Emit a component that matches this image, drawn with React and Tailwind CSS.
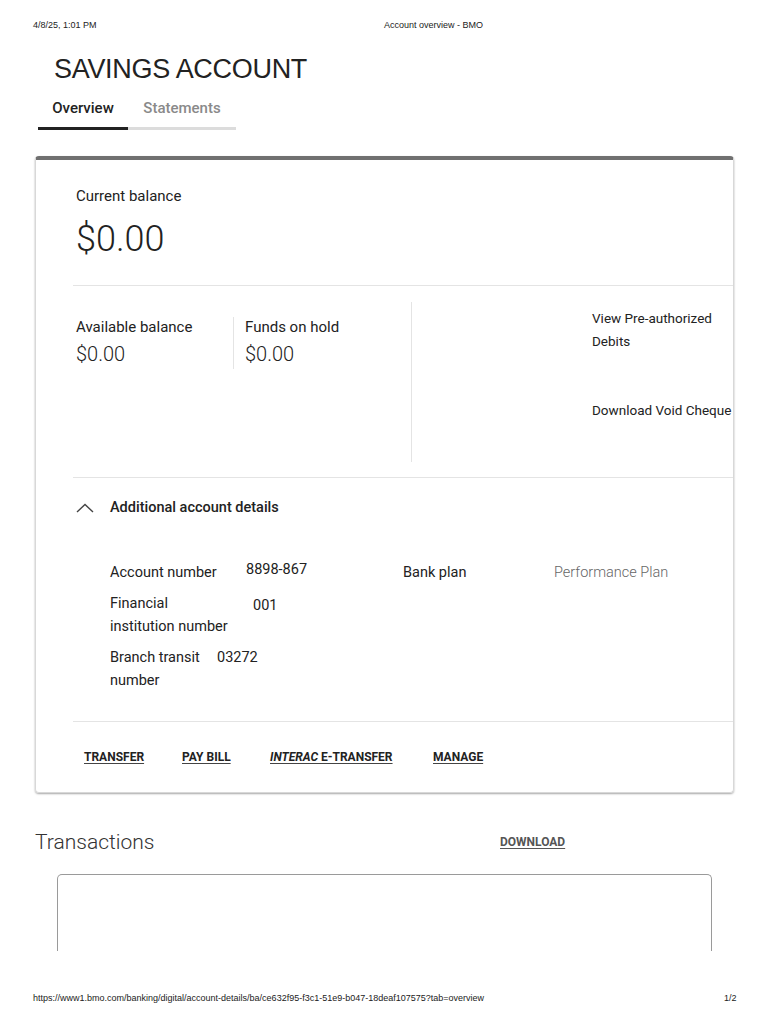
const roboto = { fontFamily: "Roboto, 'Liberation Sans', sans-serif" };

function Action({ children, slot }) {
  return (
    <div className={slot}>
      <a className="text-[12px] font-bold leading-4 text-[#222] underline underline-offset-2 decoration-[#444]">
        {children}
      </a>
    </div>
  );
}

function DetailRow({ label, labelWidth, value, valueClass = "" }) {
  return (
    <div className="flex items-start">
      <div className={labelWidth}>{label}</div>
      <div className={valueClass}>{value}</div>
    </div>
  );
}

export default function App() {
  return (
    <div className="w-[768px] h-[1024px] bg-white text-[#222] overflow-hidden flex flex-col">
      {/* print header */}
      <div className="flex pl-[33px] pt-[19px] text-[9px] leading-3 font-['Liberation_Sans',Arial,sans-serif]">
        <div className="w-[351px]">4/8/25, 1:01 PM</div>
        <div>Account overview - BMO</div>
      </div>

      <h1 className="ml-[54px] mt-[22px] text-[27px] leading-8 tracking-[-0.3px] font-['Liberation_Sans',Arial,sans-serif]">
        SAVINGS ACCOUNT
      </h1>

      {/* tabs */}
      <div className="ml-[38px] mt-[10px] flex" style={roboto}>
        <div className="w-[90px] flex flex-col">
          <div className="h-[32px] pt-[1px] text-center text-[15px] font-medium leading-6 text-[#222]">Overview</div>
          <div className="h-[3px] bg-[#222]" />
        </div>
        <div className="w-[108px] flex flex-col">
          <div className="h-[32px] pt-[1px] text-center text-[15px] font-medium leading-6 text-[#8a8a8a]">Statements</div>
          <div className="h-[3px] bg-[#dcdcdc]" />
        </div>
      </div>

      {/* account card */}
      <div
        className="ml-[35px] mt-[26px] w-[699px] h-[637px] rounded-[4px] border border-[#d8d8d8] border-t-4 border-t-[#707070] shadow-[0_1px_2px_rgba(0,0,0,0.35)] overflow-hidden pl-[37px]"
        style={roboto}
      >
        <div className="pl-[3px] pt-[26px] pb-[23px]">
          <div className="text-[15px] leading-5">Current balance</div>
          <div className="mt-[10px] text-[36px] leading-[46px] font-light">$0.00</div>
        </div>
        <div className="h-px bg-[#e4e4e4]" />

        <div className="flex h-[191px]">
          <div className="w-[338px] pt-[31px] pl-[3px] flex">
            <div className="w-[157px]">
              <div className="text-[15px] leading-5">Available balance</div>
              <div className="mt-[4px] text-[20px] leading-[26px] font-light">$0.00</div>
            </div>
            <div className="h-[52px] border-l border-[#e4e4e4] pl-[11px]">
              <div className="text-[15px] leading-5">Funds on hold</div>
              <div className="mt-[4px] text-[20px] leading-[26px] font-light">$0.00</div>
            </div>
          </div>
          <div className="mt-[16px] h-[160px] border-l border-[#e4e4e4]" />
          <div className="pl-[180px] pt-[21px] text-[13.5px] leading-[23px] whitespace-nowrap">
            <div>View Pre-authorized</div>
            <div>Debits</div>
            <div className="mt-[46px]">Download Void Cheque</div>
          </div>
        </div>
        <div className="h-px bg-[#e4e4e4]" />

        {/* additional details */}
        <div className="pt-[20px] pb-[29px]">
          <div className="flex items-center h-5">
            <svg width="18" height="10" viewBox="0 0 18 10" className="ml-[3px]" fill="none">
              <polyline points="1,9 9,1.5 17,9" stroke="#444" strokeWidth="1.4" />
            </svg>
            <div className="ml-[16px] text-[14.5px] font-medium leading-5">Additional account details</div>
          </div>
          <div className="mt-[43px] ml-[37px] flex text-[14.5px] leading-[23px]">
            <div className="w-[293px] flex flex-col gap-[8px]">
              <DetailRow
                label="Account number"
                labelWidth="w-[136px]"
                value="8898-867"
                valueClass="-mt-[3px]"
              />
              <DetailRow
                label={<>Financial<br />institution number</>}
                labelWidth="w-[143px]"
                value="001"
                valueClass="mt-[2px]"
              />
              <DetailRow
                label={<>Branch transit<br />number</>}
                labelWidth="w-[107px]"
                value="03272"
              />
            </div>
            <div className="w-[151px]">Bank plan</div>
            <div className="text-[#666] font-light">Performance Plan</div>
          </div>
        </div>
        <div className="h-px bg-[#e4e4e4]" />

        <div className="pl-[11px] pt-[22px] flex">
          <Action slot="w-[98px]">TRANSFER</Action>
          <Action slot="w-[88px]">PAY BILL</Action>
          <Action slot="w-[163px]">
            <i>INTERAC</i> E-TRANSFER
          </Action>
          <Action slot="">MANAGE</Action>
        </div>
      </div>

      {/* transactions */}
      <div className="mt-[35px] ml-[35px] flex items-center h-7" style={roboto}>
        <div className="w-[465px] text-[21px] font-light text-[#333] leading-7">Transactions</div>
        <a className="text-[12px] font-bold text-[#555] underline underline-offset-2">DOWNLOAD</a>
      </div>
      <div className="ml-[57px] mt-[18px] w-[655px] h-[77px] rounded-t-[5px] border border-b-0 border-[#9a9a9a]" />

      {/* print footer */}
      <div className="mt-[41px] flex pl-[33px] text-[9px] leading-3 font-['Liberation_Sans',Arial,sans-serif]">
        <div className="w-[691px]">
          https://www1.bmo.com/banking/digital/account-details/ba/ce632f95-f3c1-51e9-b047-18deaf107575?tab=overview
        </div>
        <div>1/2</div>
      </div>
    </div>
  );
}
